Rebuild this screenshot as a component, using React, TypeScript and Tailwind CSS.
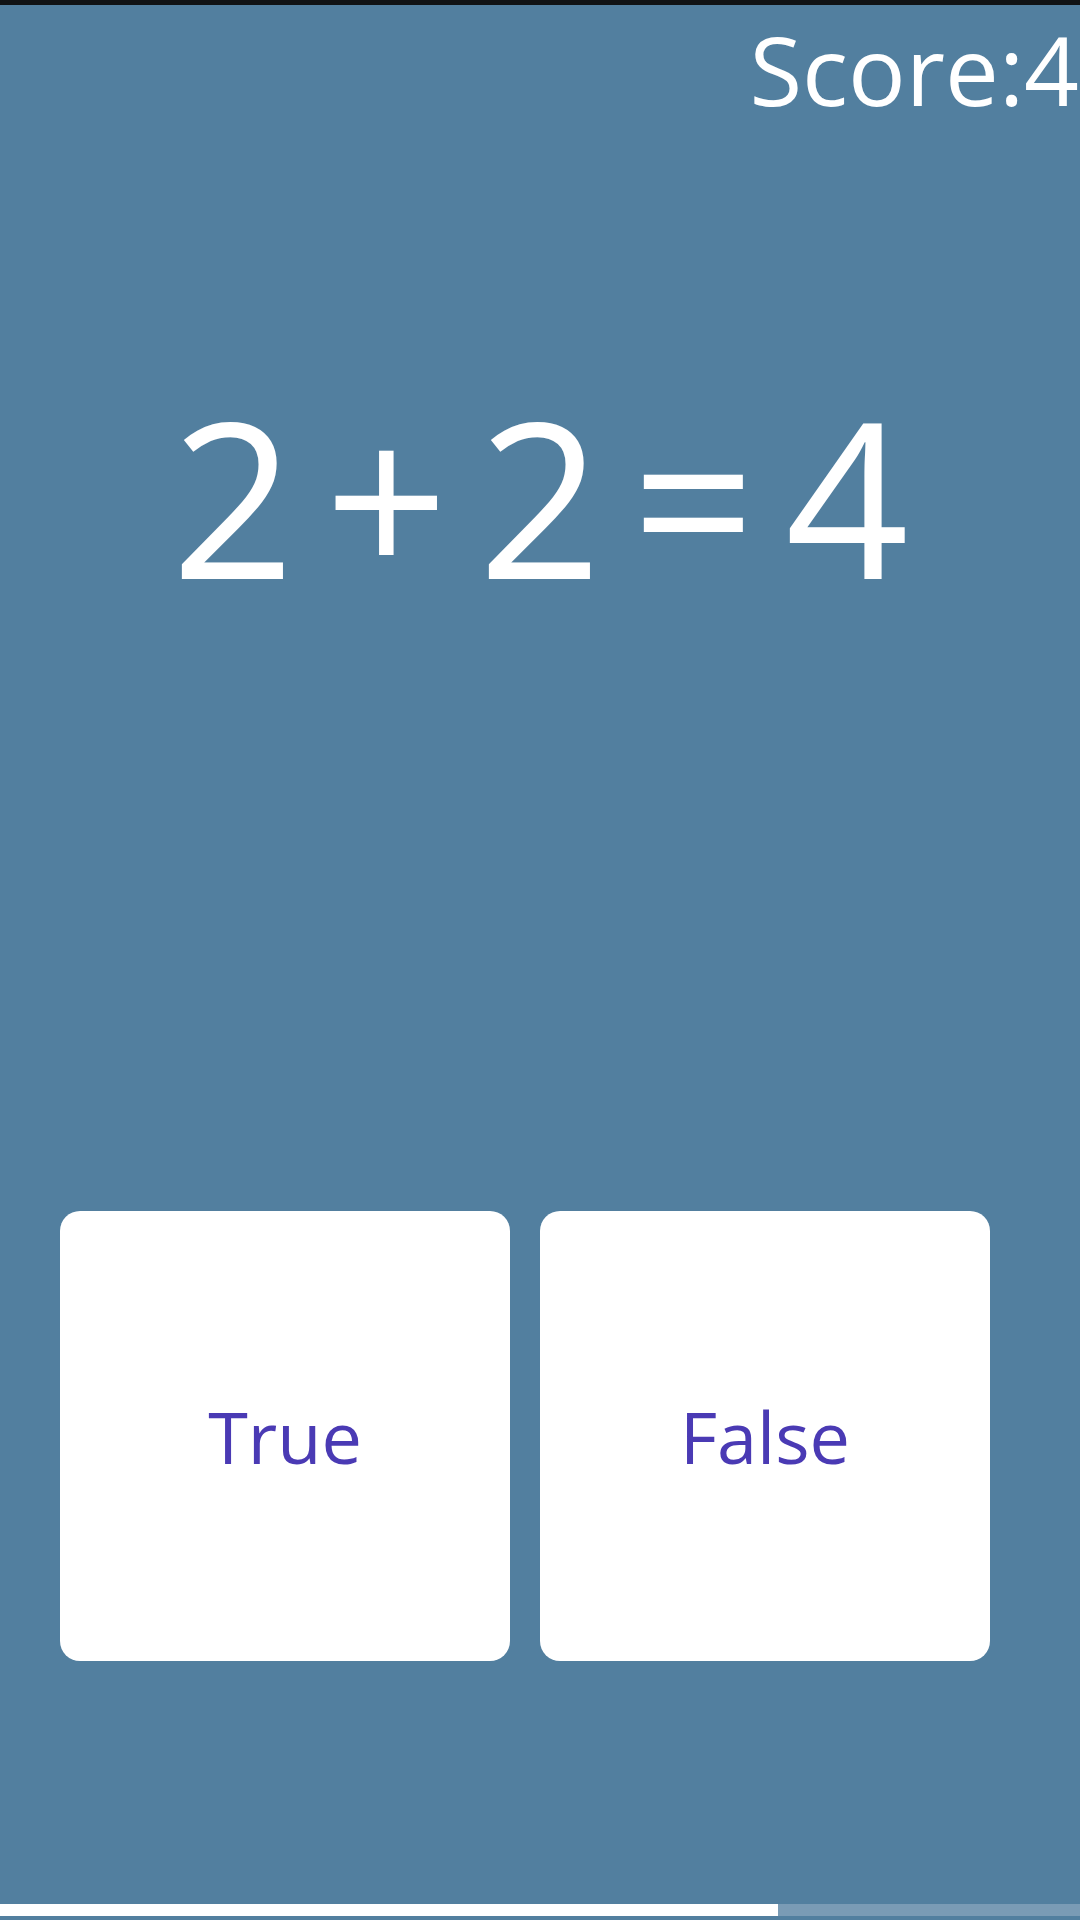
import { useState } from 'react';

const equation = ['2', '+', '2', '=', '4'];

function AnswerButton({ label, onClick }: { label: string; onClick: () => void }) {
  return (
    <button
      onClick={onClick}
      className="w-[450px] h-[450px] rounded-[20px] bg-white flex items-center justify-center text-[72px] leading-none text-[#4a3ab4]"
    >
      {label}
    </button>
  );
}

export default function App() {
  const [score, setScore] = useState(4);
  const progress = 72;

  return (
    <div className="h-[1920px] w-[1080px] flex flex-col bg-[#527f9f] text-white font-['Open_Sans',sans-serif] overflow-hidden">
      <div className="h-[5px] bg-[#111315]" />

      <div className="pt-[16px] pr-[1px] text-right text-[96px] leading-none">Score:{score}</div>

      <div className="mt-[270px] flex justify-center gap-[30px] text-[216px] leading-none">
        {equation.map((ch, i) => (
          <span key={i}>{ch}</span>
        ))}
      </div>

      <div className="mt-[608px] ml-[60px] flex gap-[30px]">
        <AnswerButton label="True" onClick={() => setScore(score + 1)} />
        <AnswerButton label="False" onClick={() => setScore(Math.max(0, score - 1))} />
      </div>

      <div className="mt-auto mb-[4px] h-[12px] bg-[#7a9bb5]">
        <div className="h-full bg-white" style={{ width: `${progress}%` }} />
      </div>
    </div>
  );
}
